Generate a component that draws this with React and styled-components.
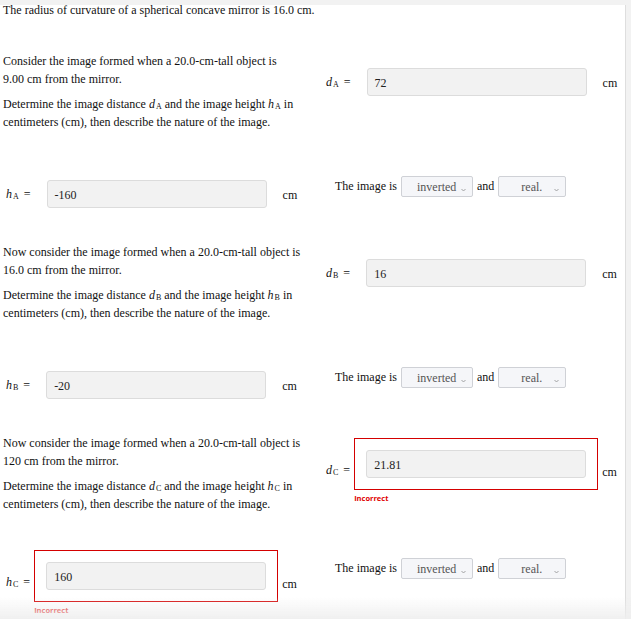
import React from "react";
import styled, { createGlobalStyle } from "styled-components";

const serif = `"Liberation Serif", "Times New Roman", serif`;

const GlobalStyle = createGlobalStyle`
  html, body {
    margin: 0;
    padding: 0;
    background: #f2f2f2;
    overflow: hidden;
  }
  body {
    font-family: ${serif};
    color: #111;
  }
`;

const Panel = styled.div`
  margin-top: 5px;
  width: 626px;
  min-height: 614px;
  background: #fff;
  border-right: 1px solid #dedede;
  box-sizing: border-box;
  font-family: ${serif};
`;

const Title = styled.p`
  margin: 0;
  padding-left: 3px;
  font-family: ${serif};
  font-size: 12px;
  line-height: 10px;
  white-space: nowrap;
`;

const SectionGrid = styled.section`
  display: grid;
  grid-template-columns: 320px 1fr;
  row-gap: 37px;
  margin-top: ${(p) => (p.first ? "37px" : "0")};
  margin-bottom: 23px;
`;

const TextBlock = styled.div`
  padding-left: 3px;
`;

const Para = styled.p`
  margin: 0 0 ${(p) => (p.last ? "0" : "7px")};
  font-family: ${serif};
  font-size: 12px;
  line-height: 18px;
  white-space: nowrap;
`;

const Var = styled.span`
  font-family: ${serif};
  font-style: italic;
`;

const Sub = styled.sub`
  font-family: ${serif};
  font-style: normal;
  font-size: 8px;
  vertical-align: -1px;
  line-height: 0;
  margin-left: 1px;
`;

const Cell = styled.div`
  padding-left: ${(p) => p.indent || 0}px;
  margin-top: ${(p) => p.top || 0}px;
`;

const Field = styled.div`
  display: flex;
  align-items: center;
`;

const Label = styled.span`
  font-family: ${serif};
  font-size: 12px;
  margin-right: 4px;
  white-space: nowrap;
  word-spacing: 2px;
`;

const AnswerBox = styled.div`
  display: flex;
  flex-direction: column;
`;

const Frame = styled.div`
  border: 1px solid ${(p) => (p.error ? "#d40000" : "transparent")};
  padding: 11px;
`;

const Input = styled.div`
  width: 220px;
  height: 28px;
  box-sizing: border-box;
  background: #f2f2f2;
  border: 1px solid #dcdcdc;
  border-radius: 3px;
  padding: 3px 7px 0;
  display: flex;
  align-items: center;
  font-family: ${serif};
  font-size: 12px;
  color: #222;
`;

const Message = styled.div`
  margin-top: 4px;
  font-family: "Open Sans", "Liberation Sans", sans-serif;
  font-weight: 700;
  font-size: 7.5px;
  line-height: 9px;
  color: #e00000;
`;

const Unit = styled.span`
  margin-left: 4px;
  font-family: ${serif};
  font-size: 12px;
  padding-top: 3px;
`;

const ImageRow = styled.div`
  display: flex;
  align-items: center;
  gap: 4px;
  font-family: ${serif};
  font-size: 12px;
  white-space: nowrap;
`;

const Select = styled.div`
  display: inline-flex;
  align-items: center;
  justify-content: space-between;
  box-sizing: border-box;
  width: ${(p) => p.w}px;
  height: 21px;
  padding: 1px 6px 0 ${(p) => p.pl}px;
  border: 1px solid #cfd1d6;
  border-radius: 2px;
  background: #f5f6f9;
  color: #555;
  font-family: ${serif};
  font-size: 12px;
`;

const Caret = () => (
  <svg width="5" height="4" viewBox="0 0 5 4" style={{ marginTop: 5 }}>
    <path d="M0.5 1 L2.5 3 L4.5 1" fill="none" stroke="#999" strokeWidth="0.9" />
  </svg>
);

const MathLabel = ({ v, sub }) => (
  <Label>
    <Var>{v}</Var>
    <Sub>{sub}</Sub> =
  </Label>
);

const Answer = ({ v, sub, value, error }) => (
  <Field>
    <MathLabel v={v} sub={sub} />
    <AnswerBox>
      <Frame error={error}>
        <Input>{value}</Input>
      </Frame>
      {error && <Message>Incorrect</Message>}
    </AnswerBox>
    <Unit>cm</Unit>
  </Field>
);

const sections = [
  { letter: "A", intro: "Consider", dist: "9.00", d: "72", h: "-160" },
  { letter: "B", intro: "Now consider", dist: "16.0", d: "16", h: "-20" },
  { letter: "C", intro: "Now consider", dist: "120", d: "21.81", h: "160", error: true },
];

const Part = ({ s, first }) => (
  <SectionGrid first={first}>
    <TextBlock>
      <Para>
        {s.intro} the image formed when a 20.0-cm-tall object is
        <br />
        {s.dist} cm from the mirror.
      </Para>
      <Para last>
        Determine the image distance <Var>d</Var>
        <Sub>{s.letter}</Sub> and the image height <Var>h</Var>
        <Sub>{s.letter}</Sub> in
        <br />
        centimeters (cm), then describe the nature of the image.
      </Para>
    </TextBlock>
    <Cell indent={6} top={4}>
      <Answer v="d" sub={s.letter} value={s.d} error={s.error} />
    </Cell>
    <Cell indent={6}>
      <Answer v="h" sub={s.letter} value={s.h} error={s.error} />
    </Cell>
    <Cell indent={15} top={8}>
      <ImageRow>
        The image is
        <Select w={72} pl={15}>
          inverted <Caret />
        </Select>
        and
        <Select w={68} pl={22}>
          real. <Caret />
        </Select>
      </ImageRow>
    </Cell>
  </SectionGrid>
);

const BottomFade = styled.div`
  position: fixed;
  left: 0;
  right: 0;
  bottom: 0;
  height: 22px;
  background: linear-gradient(rgba(240, 240, 240, 0), rgba(238, 238, 238, 0.9));
  pointer-events: none;
`;

export default function App() {
  return (
    <>
      <GlobalStyle />
      <Panel>
        <Title>The radius of curvature of a spherical concave mirror is 16.0 cm.</Title>
        {sections.map((s, i) => (
          <Part key={s.letter} s={s} first={i === 0} />
        ))}
      </Panel>
      <BottomFade />
    </>
  );
}
